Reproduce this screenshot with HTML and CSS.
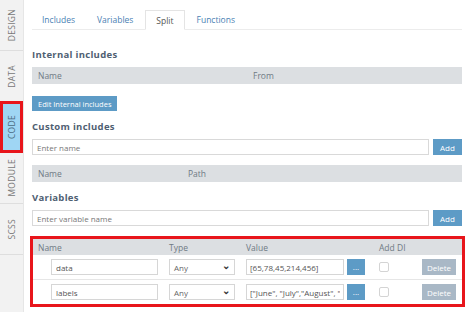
FILE: index.html
```html
<!DOCTYPE html>
<html lang="en">
<head>
    <meta charset="UTF-8">
    <title>Code - Split</title>
    <link rel="stylesheet" href="styles.css">
</head>
<body>

<div class="side-nav">
    <div class="side-tab"><span>DESIGN</span></div>
    <div class="side-tab"><span>DATA</span></div>
    <div class="side-tab active"><span>CODE</span></div>
    <div class="side-tab"><span>MODULE</span></div>
    <div class="side-tab"><span>SCSS</span></div>
</div>

<div class="main">
    <div class="tabs">
        <a class="tab">Includes</a>
        <a class="tab">Variables</a>
        <a class="tab active">Split</a>
        <a class="tab">Functions</a>
    </div>

    <h3 class="section-title first">Internal includes</h3>
    <div class="table-head">
        <span class="col-name">Name</span>
        <span>From</span>
    </div>
    <button class="btn btn-edit">Edit Internal includes</button>

    <h3 class="section-title">Custom includes</h3>
    <div class="add-row">
        <input type="text" class="text-input" placeholder="Enter name">
        <button class="btn btn-add">Add</button>
    </div>
    <div class="table-head">
        <span class="col-path-name">Name</span>
        <span>Path</span>
    </div>

    <h3 class="section-title">Variables</h3>
    <div class="add-row">
        <input type="text" class="text-input" placeholder="Enter variable name">
        <button class="btn btn-add">Add</button>
    </div>

    <div class="var-table">
        <div class="var-row var-head">
            <span>Name</span>
            <span>Type</span>
            <span>Value</span>
            <span>Add DI</span>
            <span></span>
        </div>
        <div class="var-row">
            <div class="cell-name"><input type="text" class="small-input name-input" value="data"></div>
            <div><span class="select">Any<span class="chevron">&#8964;</span></span></div>
            <div class="cell-value">
                <input type="text" class="small-input value-input" value="[65,78,45,214,456]">
                <button class="btn btn-dots">...</button>
            </div>
            <div><span class="checkbox"></span></div>
            <div class="cell-delete"><button class="btn btn-delete">Delete</button></div>
        </div>
        <div class="var-row">
            <div class="cell-name"><input type="text" class="small-input name-input" value="labels"></div>
            <div><span class="select">Any<span class="chevron">&#8964;</span></span></div>
            <div class="cell-value">
                <input type="text" class="small-input value-input" value='["June", "July","August", "'>
                <button class="btn btn-dots">...</button>
            </div>
            <div><span class="checkbox"></span></div>
            <div class="cell-delete"><button class="btn btn-delete">Delete</button></div>
        </div>
    </div>
</div>

</body>
</html>
```

FILE: styles.css
```css
/* Edytor modułu - zakładka Code / Split */
body {
    font-family: 'Open Sans', sans-serif;
    margin: 0;
    padding: 0;
    background-color: #fff;
    color: #555;
    display: flex;
    width: 474px;
    height: 312px;
    overflow: hidden;
}

.side-nav {
    width: 23px;
    background-color: #f2f2f2;
    border-right: 1px solid #e6e6e6;
    flex-shrink: 0;
}

.side-tab {
    height: 50px;
    border-bottom: 1px solid #dedede;
    display: flex;
    align-items: center;
    justify-content: center;
    color: #777;
    font-size: 8.5px;
    letter-spacing: 0.3px;
}

.side-tab span {
    writing-mode: vertical-rl;
    transform: rotate(180deg);
}

.side-tab.active {
    background-color: #9fd6f4;
    border: 3px solid #e8151b;
    height: 46px;
    margin-top: -1px;
    color: #4b6a80;
}

.main {
    flex: 1;
    padding: 8px 12px 0 8px;
}

.tabs {
    display: flex;
    height: 21px;
    border-bottom: 1px solid #ececec;
}

.tab {
    font-size: 8.5px;
    color: #4a7fb4;
    padding: 0 10px;
    margin-right: 2px;
    margin-top: 2px;
    line-height: 19px;
}

.tab.active {
    color: #555;
    border: 1px solid #e4e4e4;
    border-bottom: 1px solid #fff;
    background-color: #fff;
    margin-bottom: -1px;
}

.section-title {
    font-size: 9.5px;
    font-weight: bold;
    color: #4f6072;
    margin: 9px 0 5px 0;
    line-height: 14px;
    letter-spacing: 0.3px;
}

.section-title.first {
    margin-top: 18px;
}

.table-head {
    background-color: #dcdfe2;
    height: 17px;
    display: flex;
    align-items: center;
    font-size: 8.5px;
    color: #6f7a84;
    padding-left: 6px;
}

.col-name {
    width: 215px;
}

.col-path-name {
    width: 150px;
}

.btn {
    font-family: 'Open Sans', sans-serif;
    border: none;
    color: #fff;
    cursor: pointer;
    padding: 0;
}

.btn-edit {
    background-color: #5d9bc6;
    font-size: 7.5px;
    height: 15px;
    padding: 0 6px;
    margin-top: 12px;
    display: block;
}

.add-row {
    display: flex;
    margin-bottom: 10px;
}

.text-input {
    flex: 1;
    height: 16px;
    box-sizing: border-box;
    border: 1px solid #d9d9d9;
    font-family: 'Open Sans', sans-serif;
    font-size: 8px;
    padding: 0 4px;
    color: #555;
}

.text-input::placeholder {
    color: #777;
}

.btn-add {
    background-color: #5d9bc6;
    width: 29px;
    height: 16px;
    margin-left: 4px;
    font-size: 8px;
}

.var-table {
    border: 3px solid #e8151b;
    margin-left: -2px;
    margin-right: -3px;
}

.var-row {
    display: grid;
    grid-template-columns: 131px 77px 133px 40px 1fr;
    align-items: center;
    font-size: 8.5px;
    height: 24px;
}

.var-row + .var-row {
    border-bottom: 1px solid #e6e6e6;
}

.var-head {
    background-color: #dcdfe2;
    height: 16px;
    color: #6f7a84;
}

.var-head span {
    padding-left: 5px;
}

.var-row:last-child {
    border-bottom: none;
}

.cell-name {
    padding-left: 18px;
}

.small-input {
    height: 16px;
    box-sizing: border-box;
    border: 1px solid #d6d6d6;
    font-family: 'Open Sans', sans-serif;
    font-size: 8px;
    color: #555;
    padding: 0 4px;
}

.name-input {
    width: 107px;
}

.select {
    margin-left: 5px;
    width: 66px;
    height: 16px;
    box-sizing: border-box;
    border: 1px solid #d6d6d6;
    display: flex;
    align-items: center;
    justify-content: space-between;
    padding: 0 4px;
    font-size: 8px;
    color: #666;
}

.chevron {
    font-size: 10px;
    font-weight: bold;
    color: #333;
    line-height: 8px;
    margin-top: -5px;
}

.cell-value {
    display: flex;
    align-items: center;
    padding-left: 5px;
}

.value-input {
    width: 98px;
    padding: 0 3px;
}

.btn-dots {
    background-color: #5d9bc6;
    width: 18px;
    height: 16px;
    margin-left: 3px;
    font-size: 8px;
    line-height: 10px;
}

.checkbox {
    display: block;
    margin-left: 5px;
    width: 8px;
    height: 8px;
    border: 1px solid #d4d4d4;
    border-radius: 2px;
}

.cell-delete {
    display: flex;
    justify-content: flex-end;
    padding-right: 6px;
}

.btn-delete {
    background-color: #a9b8c6;
    width: 34px;
    height: 16px;
    font-size: 8px;
}
```
